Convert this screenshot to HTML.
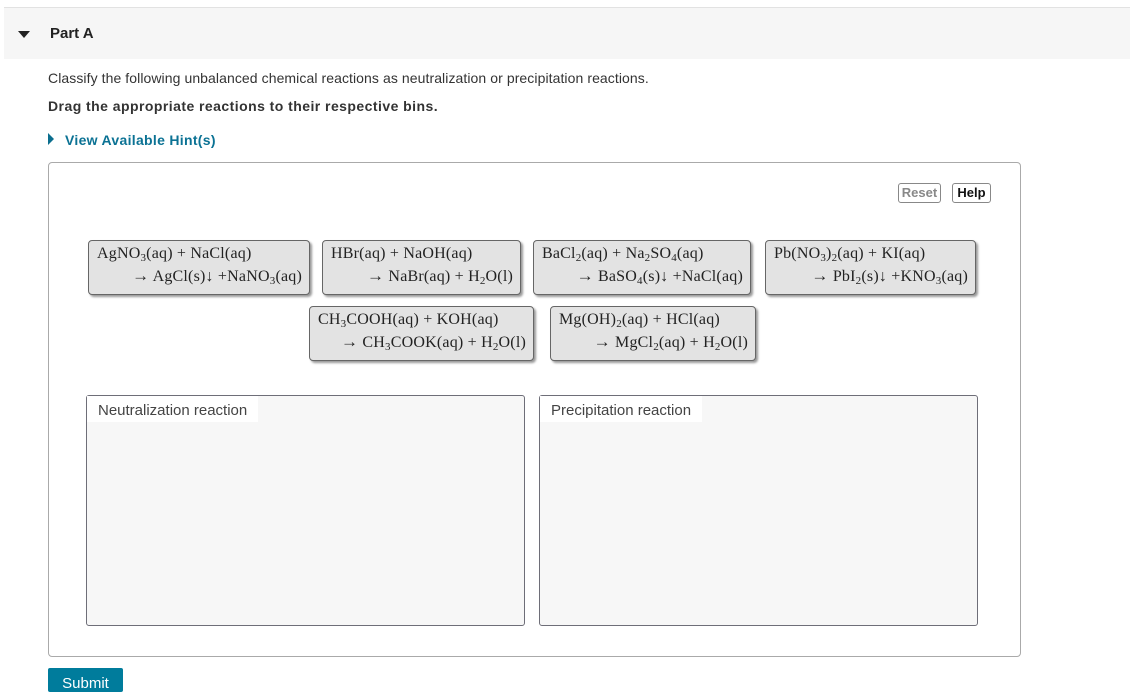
<!DOCTYPE html>
<html><head><meta charset="utf-8"><style>
body{margin:0;width:1130px;height:690px;background:#fff;position:relative;overflow:hidden;font-family:"Liberation Sans",Arial,sans-serif;color:#333}
.a{position:absolute}
.hdr{left:4px;top:7px;width:1126px;height:51px;background:#f6f6f6;border-top:1px solid #e2e2e2}
.tile{position:absolute;box-sizing:border-box;background:#e3e3e3;border:1px solid #666;border-radius:4px;box-shadow:2px 2px 2px #999;font-family:"Liberation Serif",serif;font-size:16px;letter-spacing:0.2px;color:#222;padding:2px 7px 0 8px;line-height:22px;height:55px;white-space:nowrap}
.tile .l2{text-align:right}
.ar{font-size:17px}
sub{font-size:11px;vertical-align:-3px;line-height:0}
.bin{position:absolute;box-sizing:border-box;background:#f7f7f7;border:1px solid #6e6e78;border-radius:3px;height:231px;width:439px;top:395px}
.bin span{position:absolute;left:0;top:0;background:#fff;padding:6px 11px 3px 11px;font-size:15px;color:#444}
.btn{position:absolute;top:183px;height:20px;box-sizing:border-box;border:1px solid #888;border-radius:3px;font-size:13px;font-weight:bold;line-height:18px;text-align:center;background:#fff}
</style></head><body>
<div class="a hdr"></div>
<div class="a" style="left:18px;top:31px;width:0;height:0;border-left:6px solid transparent;border-right:6px solid transparent;border-top:7px solid #222"></div>
<div class="a" style="left:50px;top:25px;font-size:15px;font-weight:bold;color:#222">Part A</div>
<div class="a" style="left:48px;top:70px;font-size:14px;letter-spacing:0.08px;color:#333">Classify the following unbalanced chemical reactions as neutralization or precipitation reactions.</div>
<div class="a" style="left:48px;top:98px;font-size:14px;font-weight:bold;letter-spacing:0.45px;color:#333">Drag the appropriate reactions to their respective bins.</div>
<div class="a" style="left:48px;top:133px;width:0;height:0;border-top:6px solid transparent;border-bottom:6px solid transparent;border-left:6px solid #0b6e8e"></div>
<div class="a" style="left:65px;top:132px;font-size:14px;font-weight:bold;letter-spacing:0.3px;color:#0b7294">View Available Hint(s)</div>
<div class="a" style="left:48px;top:162px;width:973px;height:495px;box-sizing:border-box;border:1px solid #aaa;border-radius:4px"></div>
<div class="btn" style="left:898px;width:43px;color:#888">Reset</div>
<div class="btn" style="left:952px;width:39px;color:#111">Help</div>

<div class="tile" style="left:88px;top:240px;width:222px"><div>AgNO<sub>3</sub>(aq) + NaCl(aq)</div><div class="l2"><span class="ar">→</span> AgCl(s)↓ +NaNO<sub>3</sub>(aq)</div></div>
<div class="tile" style="left:322px;top:240px;width:199px"><div>HBr(aq) + NaOH(aq)</div><div class="l2"><span class="ar">→</span> NaBr(aq) + H<sub>2</sub>O(l)</div></div>
<div class="tile" style="left:533px;top:240px;width:218px"><div>BaCl<sub>2</sub>(aq) + Na<sub>2</sub>SO<sub>4</sub>(aq)</div><div class="l2"><span class="ar">→</span> BaSO<sub>4</sub>(s)↓ +NaCl(aq)</div></div>
<div class="tile" style="left:765px;top:240px;width:211px"><div>Pb(NO<sub>3</sub>)<sub>2</sub>(aq) + KI(aq)</div><div class="l2"><span class="ar">→</span> PbI<sub>2</sub>(s)↓ +KNO<sub>3</sub>(aq)</div></div>
<div class="tile" style="left:309px;top:306px;width:225px"><div>CH<sub>3</sub>COOH(aq) + KOH(aq)</div><div class="l2"><span class="ar">→</span> CH<sub>3</sub>COOK(aq) + H<sub>2</sub>O(l)</div></div>
<div class="tile" style="left:550px;top:306px;width:206px"><div>Mg(OH)<sub>2</sub>(aq) + HCl(aq)</div><div class="l2"><span class="ar">→</span> MgCl<sub>2</sub>(aq) + H<sub>2</sub>O(l)</div></div>

<div class="bin" style="left:86px"><span>Neutralization reaction</span></div>
<div class="bin" style="left:539px"><span>Precipitation reaction</span></div>

<div class="a" style="left:48px;top:668px;width:75px;height:24px;background:#007c9c;border-radius:2px;color:#fff;font-size:15px;text-align:center;line-height:32px">Submit</div>
</body></html>
